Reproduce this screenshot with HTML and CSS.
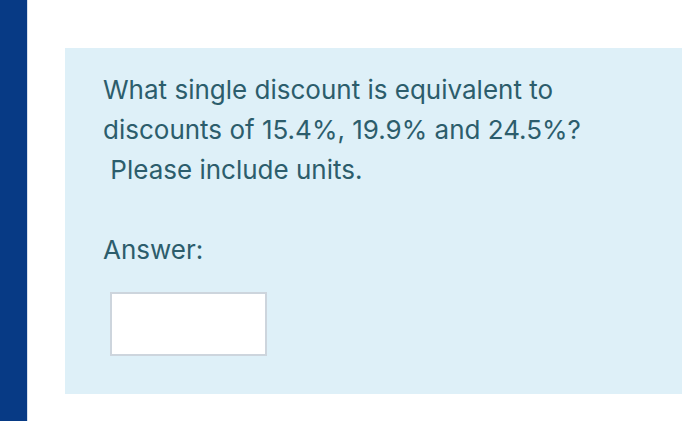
FILE: index.html
```html
<!DOCTYPE html>
<html>
<head>
<meta charset="utf-8">
<link rel="stylesheet" href="styles.css">
</head>
<body>
<div class="page">
  <div class="sidebar"></div>
  <main class="main">
    <section class="panel">
      <p class="question">What single discount is equivalent to<br>discounts of 15.4%, 19.9% and 24.5%?<br>&nbsp;Please include units.</p>
      <p class="label">Answer:</p>
      <div class="answer-box"></div>
    </section>
  </main>
</div>
</body>
</html>
```

FILE: styles.css
```css
html, body {
  margin: 0;
  padding: 0;
  background: #ffffff;
}
.page {
  display: flex;
  width: 700px;
  height: 422px;
  font-family: Inter, "Liberation Sans", Arial, sans-serif;
}
.sidebar {
  width: 27px;
  height: 421px;
  background: #073a85;
  border-right: 1px solid #d6e0ee;
  flex: none;
}
.main {
  flex: 1;
  padding: 48px 18px 0 37px;
}
.panel {
  width: 617px;
  height: 346px;
  box-sizing: border-box;
  background: #def0f8;
  padding: 22px 0 0 38px;
  color: #2c5d6c;
  font-size: 26px;
  line-height: 40px;
}
.question {
  margin: 0;
}
.label {
  margin: 40px 0 0 0;
}
.answer-box {
  margin: 22px 0 0 7px;
  width: 157px;
  height: 64px;
  box-sizing: border-box;
  background: #ffffff;
  border: 2px solid #cdd5dd;
}
```
